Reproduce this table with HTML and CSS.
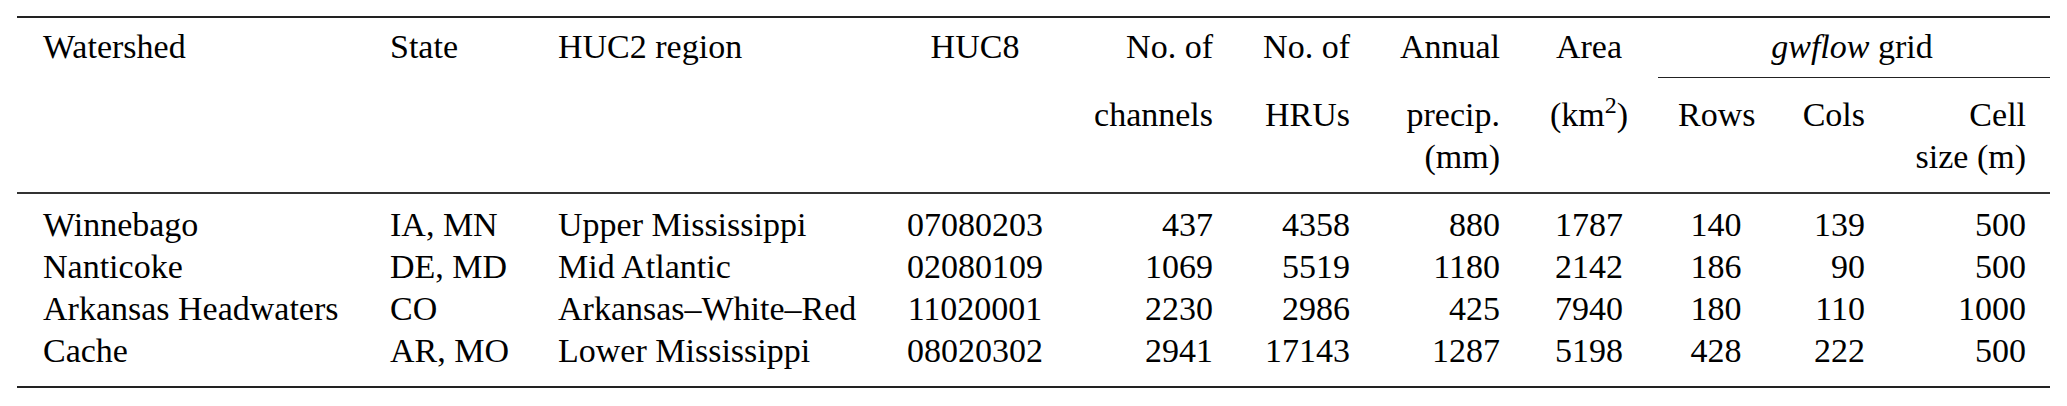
FILE: index.html
```html
<!DOCTYPE html>
<html lang="en">
<head>
<meta charset="utf-8">
<title>Watershed table</title>
<link rel="stylesheet" href="styles.css">
</head>
<body>
<table class="tbl">
  <colgroup>
    <col class="w1"><col class="w2"><col class="w3"><col class="w4"><col class="w5"><col class="w6"><col class="w7"><col class="w8"><col class="w9"><col class="w10"><col class="w11">
  </colgroup>
  <thead>
    <tr class="h1">
      <th class="l first">Watershed</th>
      <th class="l">State</th>
      <th class="l">HUC2 region</th>
      <th class="c">HUC8</th>
      <th class="r">No. of</th>
      <th class="r">No. of</th>
      <th class="r">Annual</th>
      <th class="c">Area</th>
      <th class="c last group" colspan="3"><em>gwflow</em> grid</th>
    </tr>
    <tr class="h2">
      <th class="l first"></th>
      <th class="l"></th>
      <th class="l"></th>
      <th class="c"></th>
      <th class="r">channels</th>
      <th class="r">HRUs</th>
      <th class="r">precip.<br>(mm)</th>
      <th class="c">(km<span class="sup">2</span>)</th>
      <th class="c">Rows</th>
      <th class="r">Cols</th>
      <th class="r last">Cell<br>size (m)</th>
    </tr>
  </thead>
  <tbody>
    <tr>
      <td class="l first">Winnebago</td><td class="l">IA, MN</td><td class="l">Upper Mississippi</td><td class="c">07080203</td><td class="r">437</td><td class="r">4358</td><td class="r">880</td><td class="c">1787</td><td class="c">140</td><td class="r">139</td><td class="r last">500</td>
    </tr>
    <tr>
      <td class="l first">Nanticoke</td><td class="l">DE, MD</td><td class="l">Mid Atlantic</td><td class="c">02080109</td><td class="r">1069</td><td class="r">5519</td><td class="r">1180</td><td class="c">2142</td><td class="c">186</td><td class="r">90</td><td class="r last">500</td>
    </tr>
    <tr>
      <td class="l first">Arkansas Headwaters</td><td class="l">CO</td><td class="l">Arkansas–White–Red</td><td class="c">11020001</td><td class="r">2230</td><td class="r">2986</td><td class="r">425</td><td class="c">7940</td><td class="c">180</td><td class="r">110</td><td class="r last">1000</td>
    </tr>
    <tr>
      <td class="l first">Cache</td><td class="l">AR, MO</td><td class="l">Lower Mississippi</td><td class="c">08020302</td><td class="r">2941</td><td class="r">17143</td><td class="r">1287</td><td class="c">5198</td><td class="c">428</td><td class="r">222</td><td class="r last">500</td>
    </tr>
  </tbody>
</table>
</body>
</html>
```

FILE: styles.css
```css
html, body {
  margin: 0;
  padding: 0;
  background: #ffffff;
}

.tbl {
  margin: 16px 0 0 17px;
  width: 2033px;
  table-layout: fixed;
  border-collapse: separate;
  border-spacing: 0;
  border-top: 2px solid #222;
  border-bottom: 2px solid #222;
  font-family: "Liberation Serif", "Times New Roman", serif;
  font-size: 34px;
  line-height: 42px;
  color: #000;
}

.w1 { width: 353px; }
.w2 { width: 168px; }
.w3 { width: 342px; }
.w4 { width: 190px; }
.w5 { width: 163px; }
.w6 { width: 137px; }
.w7 { width: 150px; }
.w8 { width: 138px; }
.w9 { width: 116px; }
.w10 { width: 111px; }
.w11 { width: 165px; }

.tbl th,
.tbl td {
  box-sizing: border-box;
  padding: 0 20px;
  font-weight: normal;
  vertical-align: top;
  white-space: nowrap;
}

.tbl .first { padding-left: 26px; }
.tbl .last { padding-right: 24px; }

.l { text-align: left; }
.c { text-align: center; }
.r { text-align: right; }

.h1 th {
  padding-top: 8px;
  padding-bottom: 9px;
}

.h1 th.group {
  border-bottom: 1px solid #222;
}

.h2 th {
  padding-top: 16px;
  padding-bottom: 14px;
  border-bottom: 2px solid #333;
}

.sup {
  font-size: 24px;
  line-height: 0;
  vertical-align: 13px;
}

.tbl tbody tr:first-child td { padding-top: 10px; }
.tbl tbody tr:last-child td { padding-bottom: 14px; }
```
